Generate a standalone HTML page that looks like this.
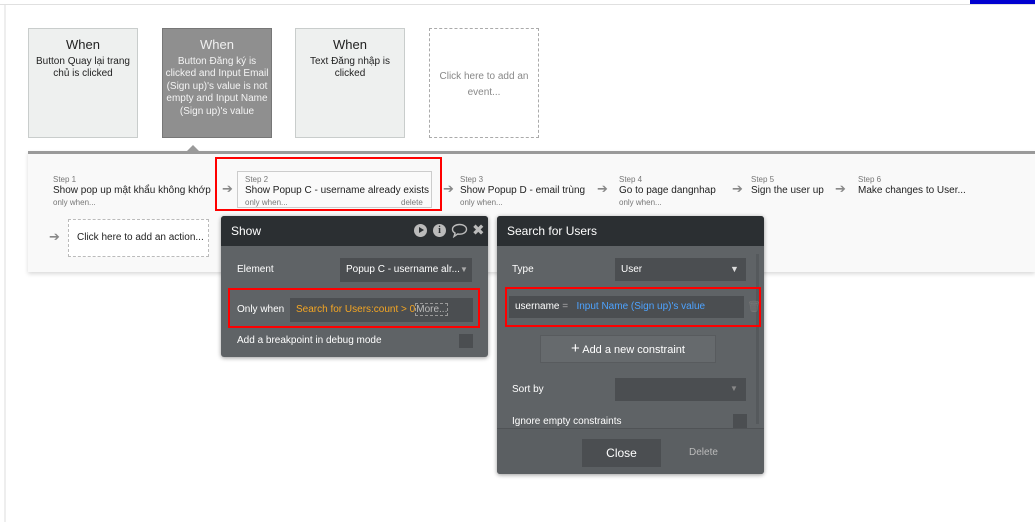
<!DOCTYPE html>
<html><head><meta charset="utf-8">
<style>
*{box-sizing:border-box;margin:0;padding:0}
body{width:1035px;height:522px;position:relative;overflow:hidden;background:#fff;font-family:"Liberation Sans","DejaVu Sans",sans-serif;color:#222}
.a{position:absolute}
.card{position:absolute;top:28px;width:110px;height:110px;background:#eef0ef;border:1px solid #c9cdcc;text-align:center;font-size:10px;line-height:12.5px;padding:0 1px}
.card b{display:block;font-weight:normal;font-size:13px;margin:10px 0 4px}
.step{position:absolute;font-size:10px;line-height:12px;color:#222;white-space:nowrap}
.step .s{font-size:8px;color:#777;line-height:11px}
.step .o{font-size:8px;color:#777;line-height:11px}
.arr{position:absolute;font-size:13px;color:#888;font-weight:bold}
.pn{position:absolute;background:#5f6366;box-shadow:0 1px 4px rgba(0,0,0,.4);border-radius:3px;overflow:hidden}
.hd{height:30px;background:#2b2f32;color:#fff;font-size:12px;line-height:30px;padding-left:10px}
.lb{position:absolute;color:#fff;font-size:10px}
.in{position:absolute;background:#4b4e51;color:#fff;font-size:10px;line-height:22px;padding-left:6px;white-space:nowrap;overflow:hidden}
.red{position:absolute;border:2px solid #f00}
.cb{position:absolute;width:14px;height:14px;background:#4b4e51}
</style></head><body>
<div class="a" style="left:0;top:4px;width:1035px;height:1px;background:#e0e0e0"></div>
<div class="a" style="left:970px;top:0;width:65px;height:4px;background:#0000d0"></div>
<div class="a" style="left:4px;top:5px;width:2px;height:517px;background:#eee"></div>

<div class="card" style="left:28px"><b>When</b>Button Quay lại trang chủ is clicked</div>
<div class="card" style="left:162px;background:#8f8f8f;border-color:#777;color:#f4f4f4"><b style="color:#f0f0f0">When</b>Button Đăng ký is clicked and Input Email (Sign up)'s value is not empty and Input Name (Sign up)'s value</div>
<div class="card" style="left:295px"><b>When</b>Text Đăng nhập is clicked</div>
<div class="card" style="left:429px;background:#fff;border:1px dashed #aaa;color:#888;padding-top:40px;line-height:16px">Click here to add an event...</div>

<div class="a" style="left:28px;top:151px;width:1007px;height:121px;background:#f9f9f9;border-top:3px solid #9a9a9a;box-shadow:0 2px 4px rgba(0,0,0,.15)"></div>
<div class="a" style="left:187px;top:145px;width:0;height:0;border-left:6px solid transparent;border-right:6px solid transparent;border-bottom:6px solid #9a9a9a"></div>

<div class="step" style="left:53px;top:174px"><div class="s">Step 1</div>Show pop up mật khẩu không khớp<div class="o">only when...</div></div>
<div class="arr" style="left:222px;top:181px">➔</div>
<div class="a" style="left:237px;top:171px;width:195px;height:37px;border:1px solid #ccc;background:#fafafa"></div>
<div class="step" style="left:245px;top:174px"><div class="s">Step 2</div>Show Popup C - username already exists<div class="o">only when...<span style="position:absolute;left:156px">delete</span></div></div>
<div class="red" style="left:215px;top:157px;width:227px;height:54px"></div>
<div class="arr" style="left:443px;top:181px">➔</div>
<div class="step" style="left:460px;top:174px"><div class="s">Step 3</div>Show Popup D - email trùng<div class="o">only when...</div></div>
<div class="arr" style="left:597px;top:181px">➔</div>
<div class="step" style="left:619px;top:174px"><div class="s">Step 4</div>Go to page dangnhap<div class="o">only when...</div></div>
<div class="arr" style="left:732px;top:181px">➔</div>
<div class="step" style="left:751px;top:174px"><div class="s">Step 5</div>Sign the user up</div>
<div class="arr" style="left:835px;top:181px">➔</div>
<div class="step" style="left:858px;top:174px"><div class="s">Step 6</div>Make changes to User...</div>

<div class="arr" style="left:49px;top:229px">➔</div>
<div class="a" style="left:68px;top:219px;width:141px;height:38px;border:1px dashed #bbb;background:#fff;font-size:10px;line-height:36px;padding-left:8px">Click here to add an action...</div>

<div class="pn" style="left:221px;top:216px;width:267px;height:141px">
<div class="hd">Show
<span class="a" style="left:193px;top:8px;width:13px;height:13px;border-radius:50%;background:#bbb"></span>
<span class="a" style="left:198px;top:11px;width:0;height:0;border-top:3.5px solid transparent;border-bottom:3.5px solid transparent;border-left:5px solid #2b2f32"></span>
<span class="a" style="left:212px;top:8px;width:13px;height:13px;border-radius:50%;background:#bbb;color:#2b2f32;font-size:10px;line-height:13px;text-align:center;font-weight:bold;font-family:'Liberation Serif',serif">i</span>
<svg class="a" style="left:230px;top:7px" width="17" height="15" viewBox="0 0 17 15"><path d="M8.5 1.5C4.5 1.5 1.5 3.6 1.5 6.3c0 1.6 1 3 2.6 3.8L3 13.5l3.6-2.5c.6.1 1.2.2 1.9.2 4 0 7-2.1 7-4.9S12.5 1.5 8.5 1.5z" fill="none" stroke="#bbb" stroke-width="1.4"/></svg>
<span class="a" style="left:251px;top:0;color:#bbb;font-size:15px;font-weight:bold">✖</span>
</div>
<div class="lb" style="left:16px;top:48px">Element</div>
<div class="in" style="left:119px;top:42px;width:132px;height:24px;line-height:24px">Popup C - username alr...<span style="color:#aaa;font-size:8px">▼</span></div>
<div class="lb" style="left:16px;top:88px">Only when</div>
<div class="in" style="left:69px;top:82px;width:183px;height:24px;line-height:24px;color:#f5a623">Search for Users<span>:count &gt; 0</span><span style="color:#bbb;border:1px dashed #999;line-height:11px;font-size:10px">More...</span></div>
<div class="lb" style="left:16px;top:119px">Add a breakpoint in debug mode</div>
<div class="cb" style="left:238px;top:118px"></div>
</div>
<div class="red" style="left:228px;top:288px;width:252px;height:40px"></div>

<div class="pn" style="left:497px;top:216px;width:267px;height:258px">
<div class="hd">Search for Users</div>
<div class="a" style="left:259px;top:38px;width:3px;height:170px;background:#55595c"></div>
<div class="lb" style="left:15px;top:48px">Type</div>
<div class="in" style="left:118px;top:42px;width:131px;height:23px;line-height:23px">User<span class="a" style="left:115px;color:#ddd;font-size:9px">▼</span></div>
<div class="in" style="left:12px;top:80px;width:235px;height:22px;background:#4b4e51"><b style="font-weight:normal">username</b> <span style="color:#aaa">=</span> &nbsp;&nbsp;<span style="color:#4da3ff">Input Name (Sign up)'s value</span></div>
<div class="a" style="left:250px;top:84px;color:#777;font-size:11px">🗑</div>
<div class="a" style="left:43px;top:119px;width:176px;height:28px;background:#666a6d;border:1px solid #585b5e;color:#fff;font-size:11px;line-height:26px;text-align:center"><span style="font-size:15px">+</span> Add a new constraint</div>
<div class="lb" style="left:15px;top:168px">Sort by</div>
<div class="in" style="left:118px;top:162px;width:131px;height:23px"><span class="a" style="left:115px;color:#888;font-size:8px">▼</span></div>
<div class="lb" style="left:15px;top:200px">Ignore empty constraints</div>
<div class="cb" style="left:236px;top:198px"></div>
<div class="a" style="left:0;top:212px;width:267px;height:46px;background:#5b5f62;border-top:1px solid #505356"></div>
<div class="a" style="left:85px;top:223px;width:79px;height:28px;background:#4b4e51;color:#fff;font-size:12px;line-height:28px;text-align:center">Close</div>
<div class="a" style="left:192px;top:231px;color:#bbb;font-size:10px">Delete</div>
</div>
<div class="red" style="left:505px;top:287px;width:256px;height:40px"></div>
</body></html>
